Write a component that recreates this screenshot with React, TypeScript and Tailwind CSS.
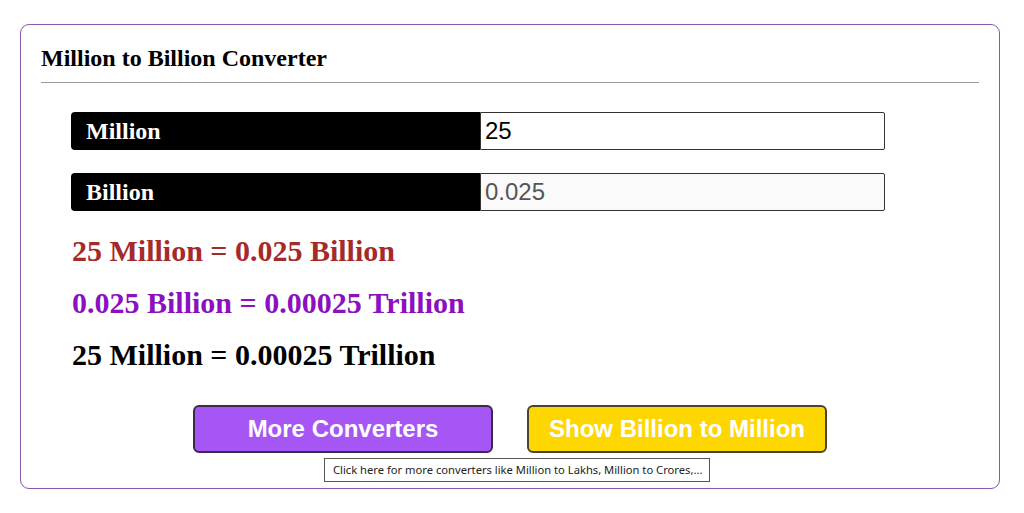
import React, { useState } from 'react';

// Million to Billion converter card
export default function App() {
  const [million, setMillion] = useState<string>('25');
  const [showTip] = useState(true);

  const serif = { fontFamily: '"Liberation Serif", "Times New Roman", serif' };
  const sans = { fontFamily: '"Liberation Sans", Arial, sans-serif' };

  return (
    <div className="min-h-screen bg-white pt-[24px] pl-[20px]">
      <div
        className="w-[980px] h-[465px] rounded-[9px] border border-[#8a58a8] px-[20px] pt-[22px]"
        style={serif}
      >
        <h2 className="text-[24px] leading-[23px] font-bold text-black">Million to Billion Converter</h2>
        <div className="mt-[12px] h-px bg-[#9a9a9a]" />

        <div className="pl-[30px] pt-[29px]">
          <div className="flex w-[814px] h-[38px]">
            <div className="w-[409px] bg-black text-white rounded-l-[4px] flex items-center pl-[15px] text-[24px] font-bold">
              Million
            </div>
            <input
              value={million}
              onChange={(e) => setMillion(e.target.value)}
              className="w-[405px] h-full border border-[#333] rounded-r-[2px] px-[4px] text-[24px] text-black bg-white outline-none"
              style={sans}
            />
          </div>

          <div className="flex w-[814px] h-[38px] mt-[23px]">
            <div className="w-[409px] bg-black text-white rounded-l-[4px] flex items-center pl-[15px] text-[24px] font-bold">
              Billion
            </div>
            <input
              readOnly
              value="0.025"
              className="w-[405px] h-full border border-[#333] rounded-r-[2px] px-[4px] text-[24px] text-[#555] bg-[#fafafa] outline-none"
              style={sans}
            />
          </div>

          <div className="mt-[24px] flex flex-col gap-[20px] text-[30px] leading-[32px] font-bold pl-[1px]">
            <div className="text-[#a52a2a]">25 Million = 0.025 Billion</div>
            <div className="text-[#8b10c0]">0.025 Billion = 0.00025 Trillion</div>
            <div className="text-black">25 Million = 0.00025 Trillion</div>
          </div>
        </div>

        <div className="mt-[34px] flex justify-center gap-[34px]" style={sans}>
          <div className="relative">
            <button className="w-[300px] h-[48px] rounded-[6px] bg-[#a656f5] border-2 border-[#3c2a4a] text-white text-[24px] font-bold">
              More Converters
            </button>
            {showTip && (
              <div
                className="absolute left-[131px] top-[53px] whitespace-nowrap border border-[#555] bg-white pl-[8px] pr-[7px] h-[24px] flex items-center text-[11.2px] text-[#222]"
                style={{ fontFamily: '"Noto Sans", "Open Sans", sans-serif' }}
              >
                Click here for more converters like Million to Lakhs, Million to Crores,...
              </div>
            )}
          </div>
          <button className="w-[300px] h-[48px] rounded-[6px] bg-[#ffd700] border-2 border-[#4a4430] text-white text-[24px] font-bold">
            Show Billion to Million
          </button>
        </div>
      </div>
    </div>
  );
}
